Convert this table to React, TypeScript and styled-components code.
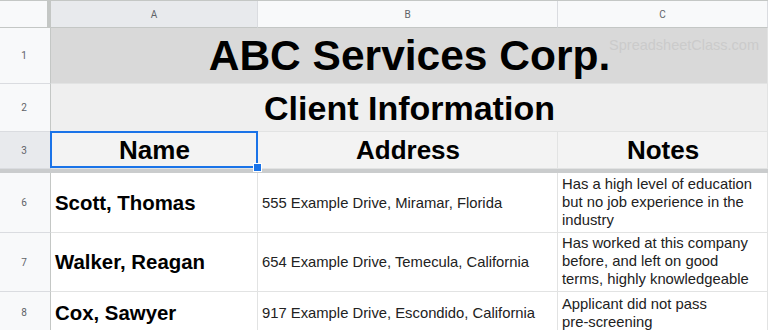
import React from "react";
import styled, { createGlobalStyle } from "styled-components";

const GlobalStyle = createGlobalStyle`
  html, body {
    margin: 0;
    padding: 0;
    background: #ffffff;
    overflow: hidden;
  }
  * {
    box-sizing: border-box;
  }
`;

const Sheet = styled.div`
  display: grid;
  grid-template-columns: 51px 207px 300px 210px;
  grid-template-rows: 27px 56px 48px 37px 4px 60px 59px 42px;
  width: 768px;
  height: 330px;
  overflow: hidden;
  font-family: "Liberation Sans", Arial, sans-serif;
  border-top: 1px solid #c4c7c5;
`;

const Corner = styled.div`
  background: #f8f9fa;
  border-right: 4px solid #c4c7c5;
  border-bottom: 1px solid #c4c7c5;
`;

const ColHeader = styled.div<{ $active?: boolean }>`
  display: flex;
  align-items: center;
  justify-content: center;
  background: ${(p) => (p.$active ? "#e8eaed" : "#f8f9fa")};
  border-right: 1px solid #dadce0;
  border-bottom: 1px solid #c4c7c5;
  color: #5f6368;
  font-family: "Roboto", "Liberation Sans", Arial, sans-serif;
  font-size: 10px;
`;

const RowHeader = styled.div<{ $active?: boolean }>`
  display: flex;
  align-items: center;
  justify-content: center;
  background: ${(p) => (p.$active ? "#e8eaed" : "#f8f9fa")};
  border-right: 1px solid #c4c7c5;
  border-bottom: 1px solid #dadce0;
  color: #5f6368;
  font-family: "Roboto", "Liberation Sans", Arial, sans-serif;
  font-size: 10px;
  padding-right: 2px;
`;

const FrozenBar = styled.div`
  grid-column: 1 / -1;
  background: #cacccd;
`;

const Cell = styled.div<{
  $bg?: string;
  $span?: number;
  $size?: number;
  $bold?: boolean;
  $align?: "left" | "center";
  $valign?: "center" | "flex-end";
}>`
  position: relative;
  display: flex;
  align-items: ${(p) => p.$valign || "center"};
  justify-content: ${(p) => (p.$align === "center" ? "center" : "flex-start")};
  grid-column: span ${(p) => p.$span || 1};
  background: ${(p) => p.$bg || "#ffffff"};
  border-right: 1px solid #e2e3e3;
  border-bottom: 1px solid #e2e3e3;
  padding: 0 3px 0 4px;
  font-size: ${(p) => p.$size || 14.8}px;
  font-weight: ${(p) => (p.$bold ? 700 : 400)};
  color: ${(p) => (p.$bold ? "#000000" : "#222222")};
  line-height: 18px;
  white-space: nowrap;
  overflow: hidden;
`;

const NoteCell = styled(Cell)`
  padding-right: 12px;
`;

const Wrapped = styled.span`
  white-space: normal;
  display: block;
  padding-bottom: 2px;
`;

const Keep = styled.span`
  white-space: nowrap;
`;

const Selection = styled.div`
  position: absolute;
  inset: -1px -1px 0 -1px;
  border: 2px solid #1a73e8;
  pointer-events: none;

  &::after {
    content: "";
    position: absolute;
    right: -6px;
    bottom: -6px;
    width: 7px;
    height: 7px;
    background: #1a73e8;
    border: 1px solid #ffffff;
  }
`;

const SelectedCell = styled(Cell)`
  overflow: visible;
  z-index: 2;
`;

const Watermark = styled.span`
  position: absolute;
  top: 8px;
  right: 8px;
  font-size: 14.5px;
  font-weight: 400;
  color: #cbcbcb;
`;

type Client = {
  row: number;
  name: string;
  address: string;
  notes: React.ReactNode;
};

const clients: Client[] = [
  {
    row: 6,
    name: "Scott, Thomas",
    address: "555 Example Drive, Miramar, Florida",
    notes: "Has a high level of education but no job experience in the industry",
  },
  {
    row: 7,
    name: "Walker, Reagan",
    address: "654 Example Drive, Temecula, California",
    notes: "Has worked at this company before, and left on good terms, highly knowledgeable",
  },
  {
    row: 8,
    name: "Cox, Sawyer",
    address: "917 Example Drive, Escondido, California",
    notes: (
      <>
        Applicant did not pass <Keep>pre-screening</Keep>
      </>
    ),
  },
];

const App = () => {
  return (
    <>
      <GlobalStyle />
      <Sheet>
        {/* Column headers */}
        <Corner />
        <ColHeader $active>A</ColHeader>
        <ColHeader>B</ColHeader>
        <ColHeader>C</ColHeader>

        {/* Title */}
        <RowHeader>1</RowHeader>
        <Cell $span={3} $bg="#d9d9d9" $size={42.5} $bold $align="center">
          ABC Services Corp.
          <Watermark>SpreadsheetClass.com</Watermark>
        </Cell>

        {/* Subtitle */}
        <RowHeader>2</RowHeader>
        <Cell $span={3} $bg="#efefef" $size={34} $bold $align="center">
          Client Information
        </Cell>

        {/* Column titles */}
        <RowHeader $active>3</RowHeader>
        <SelectedCell $bg="#f3f3f3" $size={26} $bold $align="center">
          Name
          <Selection />
        </SelectedCell>
        <Cell $bg="#f3f3f3" $size={26} $bold $align="center">
          Address
        </Cell>
        <Cell $bg="#f3f3f3" $size={26} $bold $align="center">
          Notes
        </Cell>

        <FrozenBar />

        {clients.map((c) => (
          <React.Fragment key={c.row}>
            <RowHeader>{c.row}</RowHeader>
            <Cell $size={20.4} $bold>
              {c.name}
            </Cell>
            <Cell>{c.address}</Cell>
            <NoteCell $valign={c.row === 8 ? "flex-end" : "center"}>
              <Wrapped>{c.notes}</Wrapped>
            </NoteCell>
          </React.Fragment>
        ))}
      </Sheet>
    </>
  );
};

export default App;
